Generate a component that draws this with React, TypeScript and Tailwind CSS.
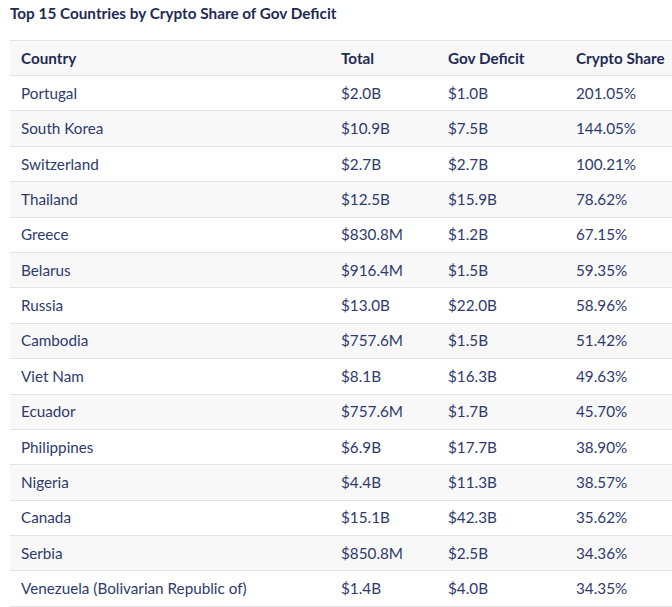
import React from "react";

const rows: [string, string, string, string][] = [
  ["Portugal", "$2.0B", "$1.0B", "201.05%"],
  ["South Korea", "$10.9B", "$7.5B", "144.05%"],
  ["Switzerland", "$2.7B", "$2.7B", "100.21%"],
  ["Thailand", "$12.5B", "$15.9B", "78.62%"],
  ["Greece", "$830.8M", "$1.2B", "67.15%"],
  ["Belarus", "$916.4M", "$1.5B", "59.35%"],
  ["Russia", "$13.0B", "$22.0B", "58.96%"],
  ["Cambodia", "$757.6M", "$1.5B", "51.42%"],
  ["Viet Nam", "$8.1B", "$16.3B", "49.63%"],
  ["Ecuador", "$757.6M", "$1.7B", "45.70%"],
  ["Philippines", "$6.9B", "$17.7B", "38.90%"],
  ["Nigeria", "$4.4B", "$11.3B", "38.57%"],
  ["Canada", "$15.1B", "$42.3B", "35.62%"],
  ["Serbia", "$850.8M", "$2.5B", "34.36%"],
  ["Venezuela (Bolivarian Republic of)", "$1.4B", "$4.0B", "34.35%"],
];

export default function App() {
  return (
    <div className="w-[672px] h-[607px] overflow-hidden bg-white pl-[10px] font-['Lato',sans-serif]">
      <div className="h-[40px] pt-[3px] text-[15.3px] font-bold text-[#1f2a55] leading-[20px]">
        Top 15 Countries by Crypto Share of Gov Deficit
      </div>
      <table className="w-[662px] border-collapse table-fixed text-[15.25px]">
        <colgroup>
          <col className="w-[320px]" />
          <col className="w-[107px]" />
          <col className="w-[128px]" />
          <col className="w-[107px]" />
        </colgroup>
        <thead>
          <tr className="bg-[#f8f8f9] border-y border-[#e3e3e3] h-[35px]">
            {["Country", "Total", "Gov Deficit", "Crypto Share"].map((h) => (
              <th
                key={h}
                className="text-left font-bold pl-[11px] py-0 text-[#1f2a55] whitespace-nowrap"
              >
                {h}
              </th>
            ))}
          </tr>
        </thead>
        <tbody>
          {rows.map((r, i) => (
            <tr
              key={r[0]}
              className={`border-b border-[#e3e3e3] h-[35.4px] ${
                i % 2 === 1 ? "bg-[#f8f8f9]" : "bg-white"
              }`}
            >
              {r.map((c, j) => (
                <td
                  key={j}
                  className="pl-[11px] py-0 text-[#2e3a6b] whitespace-nowrap"
                >
                  {c}
                </td>
              ))}
            </tr>
          ))}
        </tbody>
      </table>
    </div>
  );
}
